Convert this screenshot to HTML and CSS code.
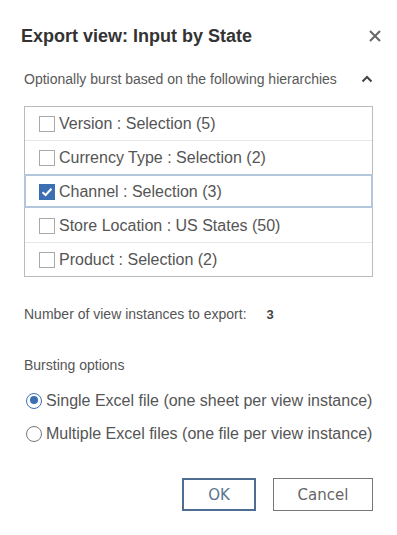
FILE: index.html
```html
<!DOCTYPE html>
<html lang="en">
<head>
    <meta charset="UTF-8">
    <title>Export view</title>
    <link rel="stylesheet" href="styles.css">
</head>
<body>
<div class="dialog">
    <div class="dialog-header">
        <h2 class="dialog-title">Export view: Input by State</h2>
        <span class="close-button">
            <svg width="12" height="12" viewBox="0 0 12 12"><path d="M1 1 L11 11 M11 1 L1 11" stroke="#666" stroke-width="2" fill="none"/></svg>
        </span>
    </div>

    <div class="section-header">
        <span>Optionally burst based on the following hierarchies</span>
        <svg class="chevron" width="12" height="8" viewBox="0 0 12 8"><path d="M1.5 6.5 L6 2 L10.5 6.5" stroke="#444" stroke-width="2" fill="none"/></svg>
    </div>

    <div class="hierarchy-list">
        <div class="hierarchy-item"><span class="checkbox"></span>Version : Selection (5)</div>
        <div class="hierarchy-item"><span class="checkbox"></span>Currency Type : Selection (2)</div>
        <div class="hierarchy-item selected">
            <span class="checkbox checked">
                <svg width="16" height="16" viewBox="0 0 16 16"><path d="M3.5 8.2 L6.6 11 L12.5 4.8" stroke="#fff" stroke-width="2" fill="none"/></svg>
            </span>Channel : Selection (3)
        </div>
        <div class="hierarchy-item"><span class="checkbox"></span>Store Location : US States (50)</div>
        <div class="hierarchy-item"><span class="checkbox"></span>Product : Selection (2)</div>
    </div>

    <div class="instance-count">
        <span>Number of view instances to export:</span>
        <span class="count-value">3</span>
    </div>

    <div class="bursting-label">Bursting options</div>

    <div class="radio-option"><span class="radio checked"></span>Single Excel file (one sheet per view instance)</div>
    <div class="radio-option"><span class="radio"></span>Multiple Excel files (one file per view instance)</div>

    <div class="dialog-buttons">
        <button class="btn btn-primary">OK</button>
        <button class="btn">Cancel</button>
    </div>
</div>
</body>
</html>
```

FILE: styles.css
```css
body {
    font-family: "Liberation Sans", Arial, sans-serif;
    margin: 0;
    padding: 0;
    background-color: #fff;
    color: #555;
}

.dialog {
    width: 397px;
    padding: 26px 24px 0 24px;
    box-sizing: border-box;
}

.dialog-header {
    display: flex;
    justify-content: space-between;
    align-items: center;
    height: 20px;
    margin-left: -3px;
}

.dialog-title {
    margin: 0;
    font-size: 18px;
    font-weight: bold;
    color: #333;
    line-height: 20px;
}

.close-button {
    display: flex;
    margin-right: -8px;
}

.section-header {
    display: flex;
    justify-content: space-between;
    align-items: center;
    margin-top: 24px;
    height: 18px;
    font-size: 14px;
    color: #595959;
}

.hierarchy-list {
    margin-top: 18px;
    border: 1px solid #bbb;
    width: 349px;
    box-sizing: border-box;
}

.hierarchy-item {
    display: flex;
    align-items: center;
    height: 34px;
    padding-left: 14px;
    padding-top: 1px;
    font-size: 16px;
    color: #555;
    border-top: 1px solid #e6e6e6;
    box-sizing: border-box;
}

.hierarchy-item:first-child {
    border-top: none;
    height: 33px;
}

.hierarchy-item.selected {
    border: 2px solid #b3c6db;
    margin: 0 -1px;
    padding-left: 13px;
}

.hierarchy-item.selected + .hierarchy-item {
    border-top: none;
}

.checkbox {
    display: inline-block;
    width: 16px;
    height: 16px;
    border: 1px solid #aaa;
    box-sizing: border-box;
    margin-right: 4px;
    background: #fff;
}

.checkbox.checked {
    background: #3c6eb4;
    border-color: #3c6eb4;
}

.checkbox svg {
    display: block;
    margin: -1px;
}

.instance-count {
    display: flex;
    margin-top: 29px;
    font-size: 14px;
    color: #555;
    height: 16px;
    align-items: center;
}

.count-value {
    font-weight: bold;
    margin-left: 20px;
    color: #444;
    font-size: 13px;
}

.bursting-label {
    margin-top: 35px;
    font-size: 14px;
    height: 16px;
    line-height: 16px;
}

.radio-option {
    display: flex;
    align-items: center;
    font-size: 16px;
    height: 33px;
    margin-left: 2px;
}

.bursting-label + .radio-option {
    margin-top: 11px;
}

.radio {
    display: inline-block;
    width: 16px;
    height: 16px;
    border: 1px solid #777;
    border-radius: 50%;
    box-sizing: border-box;
    margin-right: 4px;
    position: relative;
}

.radio.checked {
    border-color: #3c6eb4;
    border-width: 1.5px;
}

.radio.checked::after {
    content: "";
    position: absolute;
    left: 2.5px;
    top: 2.5px;
    width: 8px;
    height: 8px;
    border-radius: 50%;
    background: #3c6eb4;
}

.dialog-buttons {
    display: flex;
    justify-content: flex-end;
    gap: 17px;
    margin-top: 28px;
}

.btn {
    font-family: "DejaVu Sans", Verdana, sans-serif;
    font-size: 15px;
    color: #666;
    background: #fff;
    border: 1px solid #777;
    height: 33px;
    width: 100px;
    cursor: pointer;
}

.btn-primary {
    width: 74px;
    border: 2px solid #4e6e91;
    color: #5a7491;
}
```
